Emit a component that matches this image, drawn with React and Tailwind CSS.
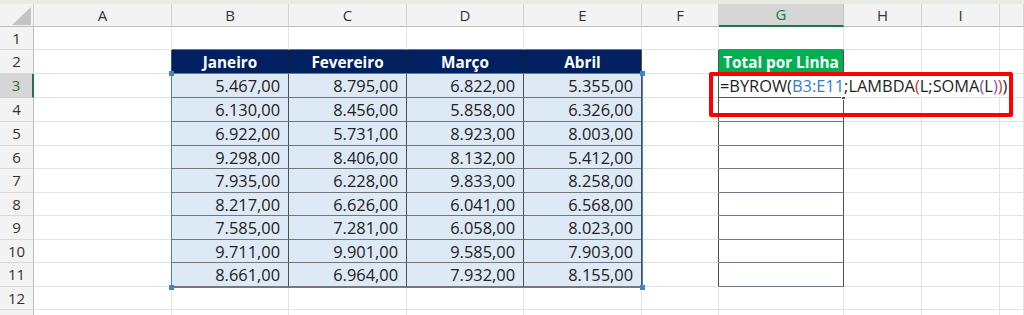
import React from "react";

const COLS = ["A", "B", "C", "D", "E", "F", "G", "H", "I", ""];

const DATA = [
  ["5.467,00", "8.795,00", "6.822,00", "5.355,00"],
  ["6.130,00", "8.456,00", "5.858,00", "6.326,00"],
  ["6.922,00", "5.731,00", "8.923,00", "8.003,00"],
  ["9.298,00", "8.406,00", "8.132,00", "5.412,00"],
  ["7.935,00", "6.228,00", "9.833,00", "8.258,00"],
  ["8.217,00", "6.626,00", "6.041,00", "6.568,00"],
  ["7.585,00", "7.281,00", "6.058,00", "8.023,00"],
  ["9.711,00", "9.901,00", "9.585,00", "7.903,00"],
  ["8.661,00", "6.964,00", "7.932,00", "8.155,00"],
];

const HEADERS = ["Janeiro", "Fevereiro", "Março", "Abril"];

function Cell({ r, c }) {
  const inTableCol = c >= 1 && c <= 4;
  const inRows = r >= 2 && r <= 11;
  let bg = "bg-white text-[16.4px]";
  let content = null;
  if (r === 2 && inTableCol) {
    bg = "bg-[#002060] text-white font-bold justify-center text-[15.3px] pt-[2px]";
    content = HEADERS[c - 1];
  } else if (r === 2 && c === 6) {
    bg = "bg-[#00b050] text-white font-bold justify-center text-[15.3px] pt-[2px]";
    content = "Total por Linha";
  } else if (inRows && inTableCol) {
    bg = "bg-[#dde9f5] text-[#222222] justify-end pr-[8px] text-[16.4px] pt-[2px]";
    content = DATA[r - 3][c - 1];
  }

  let br = "border-r-[#e3e3e3]";
  if (inRows && c <= 6) {
    br = r === 2 && c >= 1 && c <= 3 ? "border-r-[#1c1c24]" : "border-r-[#4f4f4f]";
  }
  let bb = "border-b-[#e3e3e3]";
  if (r >= 1 && r <= 11 && (inTableCol || c === 6)) {
    bb = "border-b-[#72777d]";
  }

  const isActive = r === 3 && c === 6;

  return (
    <div
      className={`relative flex items-center border-r border-b ${br} ${bb} ${bg} leading-none whitespace-nowrap`}
    >
      {content}
      {isActive && (
        <>
          <div className="absolute left-[-1px] top-[-1px] right-[-1px] bottom-[-1px] border-[1.5px] border-[#217346] z-10" />
          <div className="absolute right-[-3px] bottom-[-3px] w-[5px] h-[5px] bg-[#217346] border border-white z-10" />
          <div className="absolute left-[1px] top-0 h-[23px] w-[290px] bg-white z-20 flex items-center pt-[2px] text-[#1f1f1f] text-[16.4px]">
            <span>=BYROW(</span>
            <span className="text-[#2f7fd0]">B3:E11</span>
            <span>;LAMBDA</span>
            <span className="text-[#d6332a]">(</span>
            <span>L;SOMA</span>
            <span className="text-[#8a4fd0]">(</span>
            <span>L</span>
            <span className="text-[#8a4fd0]">)</span>
            <span className="text-[#d6332a]">)</span>
            <span>)</span>
          </div>
        </>
      )}
    </div>
  );
}

export default function App() {
  const rows = [1, 2, 3, 4, 5, 6, 7, 8, 9, 10, 11, 12, 13];
  return (
    <div
      className="relative w-[1024px] h-[315px] overflow-hidden bg-white"
      style={{ fontFamily: '"Open Sans", "Noto Sans", sans-serif' }}
    >
      <div className="h-[4px] bg-[#e8eae6]" />
      <div className="grid grid-cols-[34px_138px_117px_118px_117px_118px_77px_125px_78px_78px_24px] grid-rows-[23px_23px_24px_24px_24px_24px_23px_24px_23px_24px_23px_24px_23px_24px]">
        <div className="relative bg-[#f3f3f3] border-r border-b border-r-[#cfcfcf] border-b-[#bdbdbd]">
          <svg className="absolute left-[12px] top-[3px]" width="19" height="18" viewBox="0 0 19 18">
            <polygon points="19,0 19,18 0,18" fill="#c4c4c4" />
          </svg>
        </div>
        {COLS.map((k, i) =>
          i === 6 ? (
            <div
              key={k + i}
              className="flex items-center justify-center bg-[#d6d6d6] border-r border-r-[#c4c4c4] border-b-2 border-b-[#217346] text-[#217346] text-[15px]"
            >
              {k}
            </div>
          ) : (
            <div
              key={k + i}
              className="flex items-center justify-center bg-[#f3f3f3] border-r border-b border-r-[#d4d4d4] border-b-[#bdbdbd] text-[#333333] text-[15px]"
            >
              {k}
            </div>
          )
        )}
        {rows.map((r) => (
          <React.Fragment key={r}>
            {r === 3 ? (
              <div className="flex items-center justify-center bg-[#d6d6d6] border-r-2 border-b border-r-[#217346] border-b-[#d0d0d0] text-[#217346] text-[15px]">
                {r}
              </div>
            ) : (
              <div className="flex items-center justify-center bg-[#f3f3f3] border-r border-b border-r-[#bdbdbd] border-b-[#d9d9d9] text-[#333333] text-[15px]">
                {r <= 12 ? r : ""}
              </div>
            )}
            {COLS.map((k, c) => (
              <Cell key={c} r={r} c={c} />
            ))}
          </React.Fragment>
        ))}
      </div>

      <div className="absolute left-[171px] top-[73px] w-[472px] h-[215px] border-[1.5px] border-[#3d85cc] pointer-events-none z-20" />
      <div className="absolute left-[169px] top-[71px] w-[5px] h-[5px] bg-[#3d85cc] z-20" />
      <div className="absolute left-[640px] top-[71px] w-[5px] h-[5px] bg-[#3d85cc] z-20" />
      <div className="absolute left-[169px] top-[285px] w-[5px] h-[5px] bg-[#3d85cc] z-20" />
      <div className="absolute left-[640px] top-[285px] w-[5px] h-[5px] bg-[#3d85cc] z-20" />

      <div className="absolute left-[709px] top-[72px] w-[304px] h-[45px] border-4 border-[#ff0000] rounded-[2px] z-30" />
    </div>
  );
}
